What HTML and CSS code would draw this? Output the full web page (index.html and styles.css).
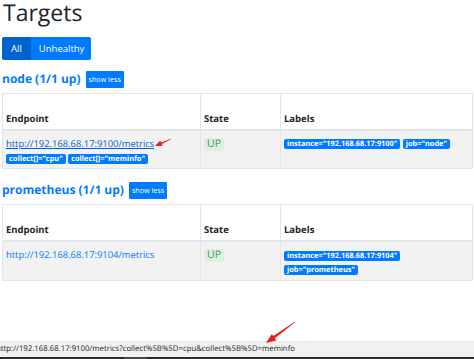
FILE: index.html
```html
<!DOCTYPE html>
<html>
<head>
    <title>Prometheus Time Series Collection and Processing Server</title>
    <link rel="stylesheet" href="styles.css">
</head>
<body>
    <h1 class="title">Targets</h1>
    <div class="filter">
        <button class="btn first active">All</button><button class="btn last">Unhealthy</button>
    </div>

    <div class="job">
        <h2 class="job-head"><a href="#job-node">node (1/1 up)</a><button class="btn-xs">show less</button></h2>
        <table class="targets">
            <colgroup><col class="c-end"><col class="c-state"><col class="c-labels"></colgroup>
            <tr>
                <th>Endpoint</th>
                <th>State</th>
                <th>Labels</th>
            </tr>
            <tr>
                <td>
                    <a class="url hover" href="#">http://192.168.68.17:9100/metrics</a>
                    <div class="params"><span class="badge">collect[]="cpu"</span> <span class="badge">collect[]="meminfo"</span></div>
                </td>
                <td><span class="up">UP</span></td>
                <td class="labels"><span class="badge">instance="192.168.68.17:9100"</span> <span class="badge">job="node"</span></td>
            </tr>
        </table>
    </div>

    <div class="job">
        <h2 class="job-head"><a href="#job-prometheus">prometheus (1/1 up)</a><button class="btn-xs">show less</button></h2>
        <table class="targets">
            <colgroup><col class="c-end"><col class="c-state"><col class="c-labels"></colgroup>
            <tr>
                <th>Endpoint</th>
                <th>State</th>
                <th>Labels</th>
            </tr>
            <tr>
                <td><a class="url" href="#">http://192.168.68.17:9104/metrics</a></td>
                <td><span class="up">UP</span></td>
                <td class="labels stacked"><span class="badge">instance="192.168.68.17:9104"</span><br><span class="badge">job="prometheus"</span></td>
            </tr>
        </table>
    </div>

    <div class="footer">
        <div class="status">http://192.168.68.17:9100/metrics?collect%5B%5D=cpu&amp;collect%5B%5D=meminfo</div>
        <div class="taskbar"><span class="task"></span></div>
    </div>

    <!-- red arrows drawn over the screenshot -->
    <svg class="arrows" width="474" height="359" viewBox="0 0 474 359">
        <polygon fill="#e8211c" points="155,146 162.6,145.9 161.8,144 171.1,139.3 170.9,138.7 161,142.4 160.2,140.5"/>
        <polygon fill="#e8211c" points="266,343 276.4,340.4 274.9,338.2 295.2,322.3 294.8,321.7 273.3,336 271.8,333.9"/>
    </svg>
</body>
</html>
```

FILE: styles.css
```css
body{
    margin:0;
    padding:0 2px;
    font-family:"Open Sans", "Noto Sans", sans-serif;
    font-size:9.4px;
    color:#212529;
    background:#fff;
    text-rendering:geometricPrecision;
}
.title{
    margin:0;
    padding:0 0 0 1px;
    font-size:23px;
    font-weight:400;
    line-height:24px;
}
.filter{
    display:flex;
    margin-top:13px;
}
.btn{
    height:23px;
    padding:0 7px 0 8px;
    border:0;
    background:#007bff;
    color:#fff;
    font-family:inherit;
    font-size:9.5px;
}
.btn.active{
    background:#0062cc;
}
.btn.first{
    padding:0 9px;
    border-radius:2px 0 0 2px;
}
.btn.last{
    border-radius:0 2px 2px 0;
}

.job-head{
    display:flex;
    align-items:center;
    gap:5px;
    margin:9px 0 4px;
    font-size:12px;
    font-weight:700;
    line-height:20px;
}
.job + .job .job-head{
    margin-top:11px;
}
.job-head a{
    color:#007bff;
    text-decoration:none;
}
.btn-xs{
    height:17px;
    padding:0 3px;
    border:0;
    border-radius:1px;
    background:#007bff;
    color:#fff;
    font-family:inherit;
    font-size:7.2px;
}

.targets{
    width:470px;
    border-collapse:collapse;
    table-layout:fixed;
}
.c-end{ width:198px; }
.c-state{ width:80px; }
.c-labels{ width:192px; }
.targets th, .targets td{
    border:1px solid #e3e6e9;
    text-align:left;
}
.targets th{
    height:32px;
    padding:0 3px 3px;
    vertical-align:bottom;
    font-size:9.5px;
    font-weight:700;
    line-height:14px;
    border-bottom:2px solid #e3e6e9;
}
.targets td{
    padding:6px 3px 4px;
    vertical-align:top;
    background:#f2f2f2;
    line-height:14px;
}
.url{
    color:#007bff;
    text-decoration:none;
}
.url.hover{
    color:#0062cc;
    text-decoration:underline;
}
.params{
    margin-top:3px;
    line-height:10px;
}
.badge{
    display:inline-block;
    height:10px;
    padding:0 3px;
    border-radius:2px;
    background:#007bff;
    color:#fff;
    font-size:7.4px;
    font-weight:700;
    line-height:10px;
    vertical-align:middle;
    white-space:nowrap;
}
.labels{
    white-space:nowrap;
}
.up{
    display:inline-block;
    height:13px;
    padding:0 3px;
    border-radius:2px;
    background:#dcefe0;
    color:#3f9a52;
    font-size:10.5px;
    line-height:13px;
}

.footer{
    position:fixed;
    left:0;
    right:0;
    bottom:0;
}
.status{
    height:15px;
    background:#f1f1f1;
    border-top:1px solid #e6e6e6;
    font-size:7.8px;
    line-height:15px;
    color:#222;
    text-indent:-4px;
    overflow:hidden;
    white-space:nowrap;
}
.taskbar{
    height:2px;
    background:#2b2b2b;
}
.task{
    display:block;
    width:23px;
    height:2px;
    margin-left:124px;
    background:#4a4a4a;
}

.arrows{
    position:absolute;
    left:0;
    top:0;
    pointer-events:none;
}
```
